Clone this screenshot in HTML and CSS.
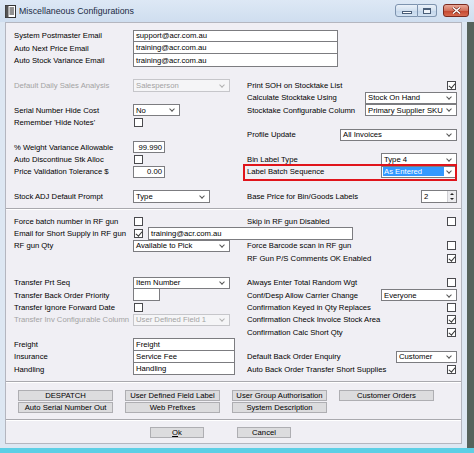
FILE: index.html
```html
<!DOCTYPE html>
<html lang="en">
<head>
    <meta charset="UTF-8">
    <title>Miscellaneous Configurations</title>
    <link rel="stylesheet" href="styles.css">
</head>
<body>
<div class="window">
    <!-- Title bar -->
    <div class="titlebar">
        <svg class="app-icon" width="11" height="13" viewBox="0 0 11 13">
            <rect x="0.5" y="0.5" width="10" height="12" fill="#fff" stroke="#333"/>
            <rect x="0.5" y="0.5" width="3" height="12" fill="#555"/>
            <line x1="4.5" y1="3" x2="9" y2="3" stroke="#222"/>
            <line x1="4.5" y1="5" x2="9" y2="5" stroke="#222"/>
            <line x1="4.5" y1="7" x2="9" y2="7" stroke="#222"/>
            <line x1="4.5" y1="9" x2="9" y2="9" stroke="#222"/>
        </svg>
        <span class="title">Miscellaneous Configurations</span>
        <div class="caption-btns">
            <div class="cbtn min"><span></span></div>
            <div class="cbtn max"><span></span></div>
            <div class="cbtn close">
                <svg width="9" height="7" viewBox="0 0 9 7">
                    <path d="M1 0.5 L8 6.5 M8 0.5 L1 6.5" stroke="#6b1f14" stroke-width="2.6"/>
                    <path d="M1 0.5 L8 6.5 M8 0.5 L1 6.5" stroke="#fff" stroke-width="1.5"/>
                </svg>
            </div>
        </div>
    </div>

    <div class="frame">
        <div class="panel">
            <div class="form">
                <div class="row"><span class="lbl">System Postmaster Email</span><div class="txt w205">support@acr.com.au</div></div>
                <div class="row"><span class="lbl">Auto Next Price Email</span><div class="txt w205 stack">training@acr.com.au</div></div>
                <div class="row"><span class="lbl">Auto Stock Variance Email</span><div class="txt w205 stack">training@acr.com.au</div></div>
                <div class="row"></div>

                <div class="cols">
                    <div class="col left">
                        <div class="row"><span class="lbl dis">Default Daily Sales Analysis</span><div class="sel dis w97">Salesperson</div></div>
                        <div class="row"></div>
                        <div class="row"><span class="lbl">Serial Number Hide Cost</span><div class="sel w47">No</div></div>
                        <div class="row"><span class="lbl">Remember 'Hide Notes'</span><span class="cb"></span></div>
                        <div class="row"></div>
                        <div class="row"><span class="lbl">% Weight Variance Allowable</span><div class="txt num w32">99.990</div></div>
                        <div class="row"><span class="lbl">Auto Discontinue Stk Alloc</span><span class="cb"></span></div>
                        <div class="row"><span class="lbl">Price Validation Tolerance $</span><div class="txt num w32">0.00</div></div>
                        <div class="row"></div>
                        <div class="row"><span class="lbl">Stock ADJ Default Prompt</span><div class="sel w77">Type</div></div>
                    </div>
                    <div class="col right">
                        <div class="row"><span>Print SOH on Stocktake List</span><span class="cb on"></span></div>
                        <div class="row"><span>Calculate Stocktake Using</span><div class="sel w92">Stock On Hand</div></div>
                        <div class="row"><span>Stocktake Configurable Column</span><div class="sel w92">Primary Supplier SKU</div></div>
                        <div class="row"></div>
                        <div class="row"><span>Profile Update</span><div class="sel w117">All Invoices</div></div>
                        <div class="row"></div>
                        <div class="row"><span>Bin Label Type</span><div class="sel w76">Type 4</div></div>
                        <div class="row marked"><span>Label Batch Sequence</span><div class="sel w76"><span class="hl">As Entered</span></div></div>
                        <div class="row"></div>
                        <div class="row"><span>Base Price for Bin/Goods Labels</span>
                            <div class="spin w36">2<span class="arrows"><i class="up"></i><i class="down"></i></span></div>
                        </div>
                    </div>
                </div>

                <div class="row sep-row"><div class="sep"></div></div>

                <div class="cols">
                    <div class="col left">
                        <div class="row"><span class="lbl">Force batch number in RF gun</span><span class="cb"></span></div>
                        <div class="row"><span class="lbl">Email for Short Supply in RF gun</span><span class="cb on"></span><div class="txt w205 after-cb">training@acr.com.au</div></div>
                        <div class="row"><span class="lbl">RF gun Qty</span><div class="sel w97">Available to Pick</div></div>
                        <div class="row"></div>
                        <div class="row"></div>
                        <div class="row"><span class="lbl">Transfer Prt Seq</span><div class="sel w97">Item Number</div></div>
                        <div class="row"><span class="lbl">Transfer Back Order Priority</span><div class="txt w27 stack"></div></div>
                        <div class="row"><span class="lbl">Transfer Ignore Forward Date</span><span class="cb"></span></div>
                        <div class="row"><span class="lbl dis">Transfer Inv Configurable Column</span><div class="sel dis w97">User Defined Field 1</div></div>
                        <div class="row"></div>
                        <div class="row"><span class="lbl">Freight</span><div class="txt w102">Freight</div></div>
                        <div class="row"><span class="lbl">Insurance</span><div class="txt w102 stack">Service Fee</div></div>
                        <div class="row"><span class="lbl">Handling</span><div class="txt w102 stack">Handling</div></div>
                    </div>
                    <div class="col right">
                        <div class="row"><span>Skip in RF gun Disabled</span><span class="cb"></span></div>
                        <div class="row"></div>
                        <div class="row"><span>Force Barcode scan in RF gun</span><span class="cb"></span></div>
                        <div class="row"><span>RF Gun P/S Comments OK Enabled</span><span class="cb on"></span></div>
                        <div class="row"></div>
                        <div class="row"><span>Always Enter Total Random Wgt</span><span class="cb"></span></div>
                        <div class="row"><span>Conf/Desp Allow Carrier Change</span><div class="sel w76">Everyone</div></div>
                        <div class="row"><span>Confirmation Keyed in Qty Replaces</span><span class="cb"></span></div>
                        <div class="row"><span>Confirmation Check Invoice Stock Area</span><span class="cb on"></span></div>
                        <div class="row"><span>Confirmation Calc Short Qty</span><span class="cb on"></span></div>
                        <div class="row"></div>
                        <div class="row"><span>Default Back Order Enquiry</span><div class="sel w61">Customer</div></div>
                        <div class="row"><span>Auto Back Order Transfer Short Supplies</span><span class="cb on"></span></div>
                    </div>
                </div>

                <div class="row sep-row"><div class="sep"></div></div>
            </div>

            <!-- Sub-dialog buttons -->
            <div class="btn-grid">
                <div class="btn">DESPATCH</div>
                <div class="btn">User Defined Field Label</div>
                <div class="btn">User Group Authorisation</div>
                <div class="btn">Customer Orders</div>
                <div class="btn">Auto Serial Number Out</div>
                <div class="btn">Web Prefixes</div>
                <div class="btn">System Description</div>
            </div>

            <div class="sep full"></div>

            <div class="dlg-btns">
                <div class="btn"><u>O</u>k</div>
                <div class="btn">Cancel</div>
            </div>
        </div>
        <div class="edge"></div>
        <div class="glass"></div>
    </div>
</div>
</body>
</html>
```

FILE: styles.css
```css
* {
    margin: 0;
    padding: 0;
    box-sizing: border-box;
}

body {
    width: 474px;
    height: 453px;
    overflow: hidden;
    background: #5ccfe5;
    font-family: 'Liberation Sans', Arial, sans-serif;
    font-size: 7.7px;
    color: #000;
}

.window {
    height: 448px;
    background: #dde7f2;
    display: flex;
    flex-direction: column;
}

/* Title bar */
.titlebar {
    height: 22px;
    display: flex;
    align-items: center;
    padding-left: 5px;
    background: linear-gradient(#dde8f5, #cfdeef);
}

.app-icon {
    flex: none;
}

.title {
    font-size: 8.8px;
    color: #1b2b44;
    margin-left: 3px;
}

.caption-btns {
    margin-left: auto;
    margin-right: 5px;
    align-self: flex-start;
    margin-top: 4px;
    display: flex;
}

.cbtn {
    height: 13px;
    display: flex;
    align-items: center;
    justify-content: center;
    border: 1px solid #7d93ae;
    background: linear-gradient(#eaf1f9, #d2e0ef 50%, #c2d5ea 51%, #d3e2f2);
}

.cbtn.min {
    width: 23px;
    border-radius: 3px 0 0 3px;
}

.cbtn.min span {
    width: 10px;
    height: 3px;
    background: #fff;
    border: 1px solid #4a5e78;
    margin-top: 3px;
}

.cbtn.max {
    width: 19px;
    border-left: none;
    border-radius: 0 3px 3px 0;
}

.cbtn.max span {
    width: 8px;
    height: 6px;
    border: 1px solid #4a5e78;
    border-top-width: 2px;
    background: #eef3f9;
}

.cbtn.close {
    width: 26px;
    margin-left: 6px;
    border: 1px solid #7a2a1f;
    border-radius: 3px;
    background: linear-gradient(#e9a898, #d2715c 50%, #c4452e 51%, #d76a4f);
}

/* Frame and client panel */
.frame {
    flex: 1;
    display: flex;
    padding-left: 5px;
}

.panel {
    width: 457px;
    height: 422px;
    border: 1px solid #b4b6bf;
    background: #f0eff4;
}

.edge {
    width: 5px;
}

.glass {
    flex: 1;
    background: #56635c;
}

.form {
    padding: 6.8px 4px 0 8px;
}

.row {
    height: 12.35px;
    display: flex;
    align-items: center;
    white-space: nowrap;
}

.cols {
    display: flex;
}

.col.left {
    width: 233px;
}

.col.right {
    flex: 1;
}

.col.right .row > :last-child {
    margin-left: auto;
}

.lbl {
    width: 119px;
    flex: none;
}

.dis {
    color: #a3a3a3;
}

/* Separators */
.sep-row {
    margin: 0 -4px 0 -8px;
}

.sep {
    width: 100%;
    border-top: 1px solid #a9a9ae;
    border-bottom: 1px solid #fff;
}

.sep.full {
    margin-top: 6px;
}

/* Controls */
.txt, .sel, .spin {
    height: 100%;
    flex: none;
    display: flex;
    align-items: center;
    padding-left: 2px;
    background: #fff;
    border: 1px solid #7c7c80;
    overflow: hidden;
}

.txt.stack {
    border-top: none;
}

.txt.num {
    justify-content: flex-end;
    padding-right: 2px;
}

.txt.after-cb {
    margin-left: 5px;
}

.sel {
    position: relative;
}

.sel::after {
    content: "";
    position: absolute;
    right: 5px;
    top: 2.5px;
    width: 3px;
    height: 3px;
    border-right: 1px solid #555;
    border-bottom: 1px solid #555;
    transform: rotate(45deg);
}

.sel.dis {
    background: #f5f5f7;
    border-color: #c6c6ca;
}

.sel.dis::after {
    border-color: #b0b0b0;
}

.hl {
    width: 61px;
    height: 9px;
    margin-left: -1px;
    padding-left: 1px;
    display: flex;
    align-items: center;
    background: #3399ff;
    color: #fff;
}

.marked {
    position: relative;
}

.marked::after {
    content: "";
    position: absolute;
    left: -4px;
    right: 0;
    top: -1.6px;
    bottom: -3px;
    border: 2px solid #e0141b;
}

.spin {
    position: relative;
}

.spin .arrows {
    position: absolute;
    right: 0;
    top: 0;
    bottom: 0;
    width: 9px;
    display: flex;
    flex-direction: column;
    background: #ececef;
    border-left: 1px solid #d0d0d4;
}

.spin i {
    flex: 1;
    display: flex;
    align-items: center;
    justify-content: center;
}

.spin i::after {
    content: "";
    border-left: 2px solid transparent;
    border-right: 2px solid transparent;
}

.spin .up::after {
    border-bottom: 2.5px solid #222;
}

.spin .down::after {
    border-top: 2.5px solid #222;
}

.w205 { width: 205px; }
.w117 { width: 117px; }
.w102 { width: 102px; }
.w97 { width: 97px; }
.w92 { width: 92px; }
.w77 { width: 77px; }
.w76 { width: 76px; }
.w61 { width: 61px; }
.w47 { width: 47px; }
.w36 { width: 36px; }
.w32 { width: 32px; }
.w27 { width: 27px; }

/* Checkboxes */
.cb {
    width: 9px;
    height: 9px;
    flex: none;
    margin-left: 1px;
    background: #fff;
    border: 1px solid #4a4a4e;
    position: relative;
}

.col.right .cb {
    margin-right: 1px;
}

.cb.on::after {
    content: "";
    position: absolute;
    left: 2.2px;
    top: 0;
    width: 2.6px;
    height: 5px;
    border-right: 1px solid #333;
    border-bottom: 1px solid #333;
    transform: rotate(40deg);
}

/* Buttons */
.btn {
    height: 11px;
    display: flex;
    align-items: center;
    justify-content: center;
    background: #dcdcde;
    border: 1px solid #aeaeb2;
    white-space: nowrap;
}

.btn-grid {
    display: grid;
    grid-template-columns: repeat(4, 95px);
    column-gap: 12px;
    row-gap: 1px;
    padding-left: 12px;
    margin-top: 2px;
}

.dlg-btns {
    display: flex;
    gap: 33px;
    padding-left: 144px;
    margin-top: 6px;
}

.dlg-btns .btn {
    width: 54px;
}
```
